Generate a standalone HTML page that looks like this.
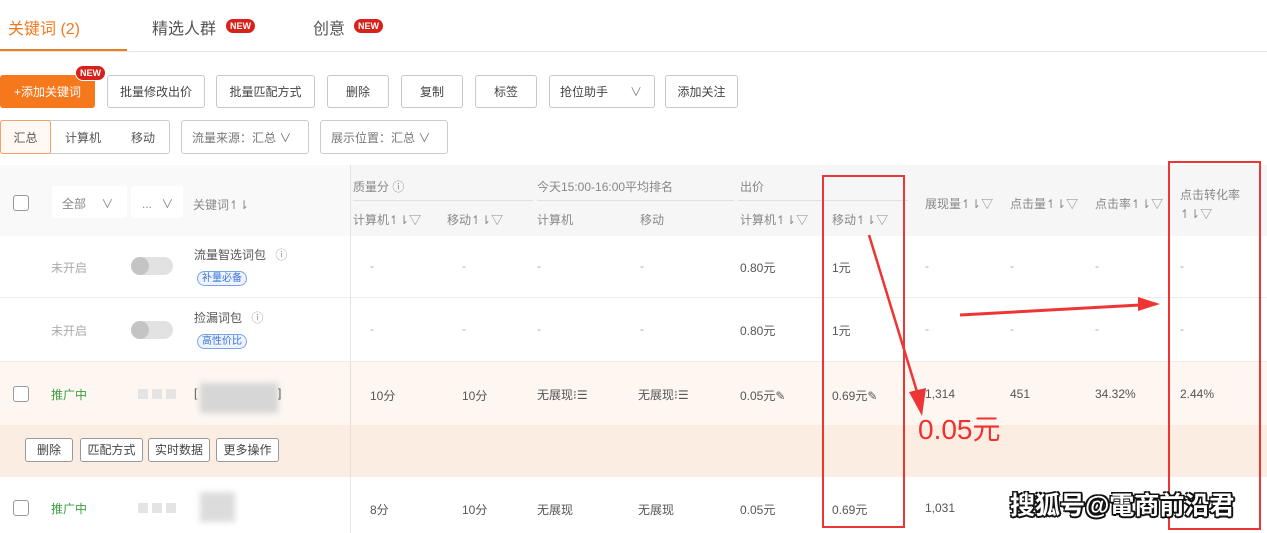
<!DOCTYPE html>
<html><head><meta charset="utf-8"><style>
*{margin:0;padding:0;box-sizing:border-box}
body{width:1267px;height:533px;overflow:hidden;background:#fff;font-family:"Liberation Sans","Noto Sans CJK SC",sans-serif;color:#555;font-size:12px;position:relative}
.a{position:absolute;white-space:nowrap}
.btn{position:absolute;top:75px;height:33px;border:1px solid #c8c8c8;border-radius:3px;background:#fff;font-size:12px;color:#444;display:flex;align-items:center;justify-content:center}
.sel{position:absolute;top:120px;height:34px;border:1px solid #ccc;border-radius:3px;background:#fff;font-size:12px;color:#777;display:flex;align-items:center}
.new{position:absolute;background:#d8211a;color:#fff;font-size:9px;font-weight:bold;border-radius:8px;padding:1px 4px;line-height:12px}
.g{color:#aaa}
.h{color:#888;font-size:12px}
.tag{position:absolute;border:1px solid #7aa4e8;color:#3b73d6;font-size:10px;border-radius:8px;padding:0 4px;line-height:13px;background:#eef4ff}
.tog{position:absolute;width:42px;height:18px;border-radius:9px;background:#e2e2e2}
.tog:before{content:"";position:absolute;left:0;top:0;width:18px;height:18px;border-radius:9px;background:#c4c4c4}
.cb{position:absolute;width:16px;height:16px;border:1px solid #999;border-radius:3px;background:#fff}
.sb{position:absolute;height:24px;border:1px solid #999;border-radius:3px;background:#fff;font-size:12px;color:#444;line-height:22px;top:438px;text-align:center}
</style></head><body>
<!-- tabs -->
<div class="a" style="left:8px;top:15px;font-size:16px;color:#f07a20">关键词 (2)</div>
<div class="a" style="left:152px;top:15px;font-size:16px;color:#555">精选人群</div>
<div class="new" style="left:226px;top:19px">NEW</div>
<div class="a" style="left:313px;top:15px;font-size:16px;color:#555">创意</div>
<div class="new" style="left:354px;top:19px">NEW</div>
<div class="a" style="left:0;top:51px;width:1267px;height:1px;background:#e6e6e6"></div>
<div class="a" style="left:0;top:49px;width:127px;height:2px;background:#f07a20"></div>
<!-- toolbar -->
<div class="btn" style="left:0;width:95px;background:#f6781c;border-color:#f6781c;color:#fff">+添加关键词</div>
<div class="new" style="left:75px;top:65px;border:1px solid #fff">NEW</div>
<div class="btn" style="left:107px;width:98px">批量修改出价</div>
<div class="btn" style="left:216px;width:99px">批量匹配方式</div>
<div class="btn" style="left:327px;width:62px">删除</div>
<div class="btn" style="left:401px;width:62px">复制</div>
<div class="btn" style="left:475px;width:62px">标签</div>
<div class="btn" style="left:549px;width:106px;justify-content:flex-start;padding-left:10px">抢位助手<span style="margin-left:22px;color:#888">∨</span></div>
<div class="btn" style="left:665px;width:73px">添加关注</div>
<!-- row2 -->
<div class="sel" style="left:0;width:170px;color:#555"><span style="display:flex;align-items:center;justify-content:center;width:51px;height:34px;border:1px solid #f5a26a;border-radius:3px;background:#fff8f3;margin-left:-1px">汇总</span><span style="margin-left:14px">计算机</span><span style="margin-left:30px">移动</span></div>
<div class="sel" style="left:181px;width:128px;padding-left:10px">流量来源：汇总 ∨</div>
<div class="sel" style="left:320px;width:128px;padding-left:10px">展示位置：汇总 ∨</div>
<!-- header -->
<div class="a" style="left:0;top:165px;width:1267px;height:71px;background:#f6f6f6"></div>
<div class="a" style="left:0;top:165px;width:350px;height:71px;background:#f9f9f9"></div>
<div class="a" style="left:350px;top:165px;width:1px;height:368px;background:#e4e4e4"></div>
<div class="cb" style="left:13px;top:195px"></div>
<div class="a" style="left:52px;top:186px;width:75px;height:32px;background:#fff;border-radius:3px"></div>
<div class="a h" style="left:62px;top:195px">全部 <span style="margin-left:12px">∨</span></div>
<div class="a" style="left:131px;top:186px;width:52px;height:32px;background:#fff;border-radius:3px"></div>
<div class="a h" style="left:142px;top:195px">... <span style="margin-left:6px">∨</span></div>
<div class="a h" style="left:193px;top:196px">关键词↿⇂</div>
<div class="a h" style="left:353px;top:178px">质量分 ⓘ</div>
<div class="a h" style="left:537px;top:178px">今天15:00-16:00平均排名</div>
<div class="a h" style="left:740px;top:178px">出价</div>
<div class="a" style="left:353px;top:200px;width:180px;height:1px;background:#e0e0e0"></div>
<div class="a" style="left:537px;top:200px;width:197px;height:1px;background:#e0e0e0"></div>
<div class="a" style="left:738px;top:200px;width:170px;height:1px;background:#e0e0e0"></div>
<div class="a h" style="left:353px;top:211px">计算机↿⇂▽</div>
<div class="a h" style="left:447px;top:211px">移动↿⇂▽</div>
<div class="a h" style="left:537px;top:211px">计算机</div>
<div class="a h" style="left:640px;top:211px">移动</div>
<div class="a h" style="left:740px;top:211px">计算机↿⇂▽</div>
<div class="a h" style="left:832px;top:211px">移动↿⇂▽</div>
<div class="a h" style="left:925px;top:195px">展现量↿⇂▽</div>
<div class="a h" style="left:1010px;top:195px">点击量↿⇂▽</div>
<div class="a h" style="left:1095px;top:195px">点击率↿⇂▽</div>
<div class="a h" style="left:1180px;top:186px">点击转化率</div>
<div class="a h" style="left:1180px;top:205px">↿⇂▽</div>
<!-- rows bg -->
<div class="a" style="left:0;top:297px;width:1267px;height:1px;background:#ececec"></div>
<div class="a" style="left:0;top:361px;width:1267px;height:1px;background:#ececec"></div>
<div class="a" style="left:0;top:362px;width:1267px;height:63px;background:#fdf6f1"></div>
<div class="a" style="left:0;top:425px;width:1267px;height:52px;background:#fcede3"></div>
<div class="a" style="left:350px;top:362px;width:1px;height:115px;background:#eadfd8"></div>
<!-- row1 -->
<div class="a g" style="left:51px;top:259px">未开启</div>
<div class="tog" style="left:131px;top:257px"></div>
<div class="a" style="left:194px;top:246px;color:#555">流量智选词包 <span style="color:#999;margin-left:6px">ⓘ</span></div>
<div class="tag" style="left:197px;top:271px">补量必备</div>
<div class="a g" style="left:370px;top:259px">-</div><div class="a g" style="left:462px;top:259px">-</div><div class="a g" style="left:537px;top:259px">-</div><div class="a g" style="left:640px;top:259px">-</div>
<div class="a" style="left:740px;top:259px">0.80元</div><div class="a" style="left:832px;top:259px">1元</div>
<div class="a g" style="left:925px;top:259px">-</div><div class="a g" style="left:1010px;top:259px">-</div><div class="a g" style="left:1095px;top:259px">-</div><div class="a g" style="left:1180px;top:259px">-</div>
<!-- row2 -->
<div class="a g" style="left:51px;top:322px">未开启</div>
<div class="tog" style="left:131px;top:321px"></div>
<div class="a" style="left:194px;top:309px;color:#555">捡漏词包 <span style="color:#999;margin-left:6px">ⓘ</span></div>
<div class="tag" style="left:197px;top:334px">高性价比</div>
<div class="a g" style="left:370px;top:322px">-</div><div class="a g" style="left:462px;top:322px">-</div><div class="a g" style="left:537px;top:322px">-</div><div class="a g" style="left:640px;top:322px">-</div>
<div class="a" style="left:740px;top:322px">0.80元</div><div class="a" style="left:832px;top:322px">1元</div>
<div class="a g" style="left:925px;top:322px">-</div><div class="a g" style="left:1010px;top:322px">-</div><div class="a g" style="left:1095px;top:322px">-</div><div class="a g" style="left:1180px;top:322px">-</div>
<!-- row3 -->
<div class="cb" style="left:13px;top:386px"></div>
<div class="a" style="left:51px;top:386px;color:#3aa040">推广中</div>
<div class="a" style="left:138px;top:389px;width:40px;height:10px;background:repeating-linear-gradient(90deg,#e4e4e4 0 10px,transparent 10px 14px)"></div>
<div class="a" style="left:194px;top:386px">[</div>
<div class="a" style="left:200px;top:383px;width:78px;height:30px;background:#d6d6d6;filter:blur(3px)"></div>
<div class="a" style="left:278px;top:386px">]</div>
<div class="a" style="left:370px;top:387px">10分</div><div class="a" style="left:462px;top:387px">10分</div>
<div class="a" style="left:537px;top:386px">无展现⁝☰</div><div class="a" style="left:638px;top:386px">无展现⁝☰</div>
<div class="a" style="left:740px;top:387px">0.05元✎</div><div class="a" style="left:832px;top:387px">0.69元✎</div>
<div class="a" style="left:925px;top:387px">1,314</div><div class="a" style="left:1010px;top:387px">451</div><div class="a" style="left:1095px;top:387px">34.32%</div><div class="a" style="left:1180px;top:387px">2.44%</div>
<!-- action row -->
<div class="sb" style="left:25px;width:48px">删除</div>
<div class="sb" style="left:80px;width:63px">匹配方式</div>
<div class="sb" style="left:148px;width:62px">实时数据</div>
<div class="sb" style="left:216px;width:63px">更多操作</div>
<!-- row4 -->
<div class="cb" style="left:13px;top:500px"></div>
<div class="a" style="left:51px;top:500px;color:#3aa040">推广中</div>
<div class="a" style="left:138px;top:503px;width:40px;height:10px;background:repeating-linear-gradient(90deg,#e4e4e4 0 10px,transparent 10px 14px)"></div>
<div class="a" style="left:200px;top:492px;width:35px;height:30px;background:#dcdcdc;filter:blur(3px)"></div>
<div class="a" style="left:370px;top:501px">8分</div><div class="a" style="left:462px;top:501px">10分</div>
<div class="a" style="left:537px;top:501px">无展现</div><div class="a" style="left:638px;top:501px">无展现</div>
<div class="a" style="left:740px;top:501px">0.05元</div><div class="a" style="left:832px;top:501px">0.69元</div>
<div class="a" style="left:925px;top:501px">1,031</div>
<!-- annotations -->
<div class="a" style="left:822px;top:175px;width:83px;height:353px;border:2px solid #ee3535"></div>
<div class="a" style="left:1168px;top:161px;width:93px;height:369px;border:2px solid #ee3535"></div>
<svg class="a" style="left:0;top:0" width="1267" height="533">
<path d="M869 235 L918 395" stroke="#ee3535" stroke-width="2.5" fill="none"/>
<polygon points="909,392 926,388 922,416" fill="#ee3535"/>
<path d="M960 315 L1140 305" stroke="#ee3535" stroke-width="3" fill="none"/>
<polygon points="1138,297 1160,304 1138,311" fill="#ee3535"/>
</svg>
<div class="a" style="left:918px;top:414px;font-size:28px;color:#f03030;line-height:32px">0.05元</div>
<div class="a" style="left:1010px;top:490px;font-size:25px;font-weight:bold;color:#fff;line-height:32px;text-shadow:-1.5px -1.5px 0 #111,1.5px -1.5px 0 #111,-1.5px 1.5px 0 #111,1.5px 1.5px 0 #111,0 2px 0 #111,2px 0 0 #111">搜狐号@電商前沿君</div>
</body></html>
